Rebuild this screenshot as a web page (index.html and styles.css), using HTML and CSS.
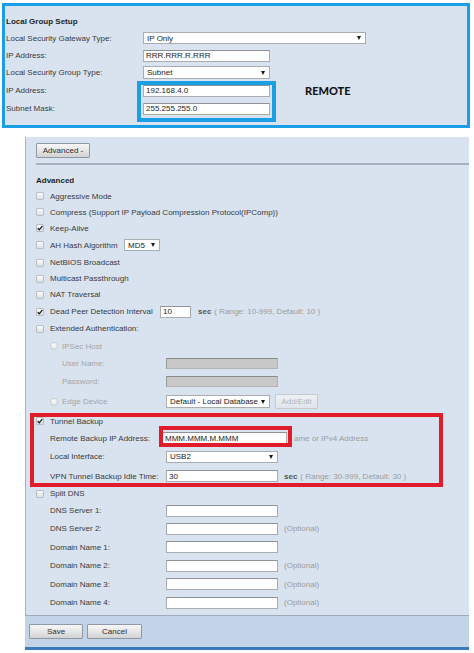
FILE: index.html
```html
<!DOCTYPE html>
<html>
<head>
<meta charset="utf-8">
<title>Local Group Setup</title>
<link rel="stylesheet" href="styles.css">
</head>
<body>
<section class="local">
  <div class="lrow head">Local Group Setup</div>
  <div class="lrow h18"><span class="lbl">Local Security Gateway Type:</span><span class="sel w223">IP Only<i class="arr"></i></span></div>
  <div class="lrow h17"><span class="lbl">IP Address:</span><input class="txt w127" type="text" value="RRR.RRR.R.RRR"></div>
  <div class="lrow h17"><span class="lbl">Local Security Group Type:</span><span class="sel w127 tall">Subnet<i class="arr"></i></span></div>
  <div class="remote-grp">
    <div class="lrow h19"><span class="lbl">IP Address:</span><input class="txt w127" type="text" value="192.168.4.0"><span class="remote-tag">REMOTE</span></div>
    <div class="lrow h17"><span class="lbl">Subnet Mask:</span><input class="txt w127" type="text" value="255.255.255.0"></div>
    <div class="blue-frame"></div>
  </div>
</section>

<section class="panel">
  <button class="btn adv-btn" type="button">Advanced -</button>
  <div class="rule"></div>
  <div class="adv-head">Advanced</div>

  <div class="row h16"><span class="cb"></span>Aggressive Mode</div>
  <div class="row h16"><span class="cb"></span>Compress (Support IP Payload Compression Protocol(IPComp))</div>
  <div class="row h16"><span class="cb"><svg viewBox="0 0 6 6" width="6" height="6"><path d="M0.7 3.1 2.3 4.8 5.4 0.9" fill="none" stroke="#1c1c1c" stroke-width="1.3"/></svg></span>Keep-Alive</div>
  <div class="row h18"><span class="cb"></span><span class="lbl-ah">AH Hash Algorithm</span><span class="sel w36">MD5<i class="arr"></i></span></div>
  <div class="row h17"><span class="cb"></span>NetBIOS Broadcast</div>
  <div class="row h15"><span class="cb"></span>Multicast Passthrough</div>
  <div class="row h17"><span class="cb"></span>NAT Traversal</div>
  <div class="row h17"><span class="cb"><svg viewBox="0 0 6 6" width="6" height="6"><path d="M0.7 3.1 2.3 4.8 5.4 0.9" fill="none" stroke="#1c1c1c" stroke-width="1.3"/></svg></span><span class="lbl-dpd">Dead Peer Detection Interval</span><input class="txt w31" type="text" value="10"><span class="sec">sec</span><span class="hint">( Range: 10-999, Default: 10 )</span></div>
  <div class="row h17"><span class="cb"></span>Extended Authentication:</div>
  <div class="row h18 sub dis"><span class="rd"></span>IPSec Host</div>
  <div class="row h17 sub2 dis"><span class="lbl2">User Name:</span><input class="txt w112 off" type="text" disabled></div>
  <div class="row h19 sub2 dis"><span class="lbl2">Password:</span><input class="txt w112 off" type="text" disabled></div>
  <div class="row h21 sub"><span class="lbl1 dis"><span class="rd"></span>Edge Device</span><span class="sel w104 tall">Default - Local Database<i class="arr"></i></span><button class="btn add-btn" type="button" disabled>Add/Edit</button></div>

  <div class="tunnel">
    <div class="row h18"><span class="cb"><svg viewBox="0 0 6 6" width="6" height="6"><path d="M0.7 3.1 2.3 4.8 5.4 0.9" fill="none" stroke="#1c1c1c" stroke-width="1.3"/></svg></span>Tunnel Backup</div>
    <div class="row h16 sub"><span class="lbl-rb">Remote Backup IP Address:</span><span class="mmm-wrap"><input class="txt w125" type="text" value="MMM.MMM.M.MMM"><span class="mmm-frame"></span></span><span class="hint gap7">ame or IPv4 Address</span></div>
    <div class="row h21 sub"><span class="lbl1">Local Interface:</span><span class="sel w112">USB2<i class="arr"></i></span></div>
    <div class="row h18 sub"><span class="lbl1">VPN Tunnel Backup Idle Time:</span><input class="txt w112" type="text" value="30"><span class="sec gap6">sec</span><span class="hint">( Range: 30-999, Default: 30 )</span></div>
    <div class="red-frame"></div>
  </div>

  <div class="row h17"><span class="cb"></span>Split DNS</div>
  <div class="row h17 sub"><span class="lbl1">DNS Server 1:</span><input class="txt w112" type="text"></div>
  <div class="row h19 sub"><span class="lbl1">DNS Server 2:</span><input class="txt w112" type="text"><span class="hint gap6">(Optional)</span></div>
  <div class="row h18 sub"><span class="lbl1">Domain Name 1:</span><input class="txt w112" type="text"></div>
  <div class="row h19 sub"><span class="lbl1">Domain Name 2:</span><input class="txt w112" type="text"><span class="hint gap6">(Optional)</span></div>
  <div class="row h18 sub"><span class="lbl1">Domain Name 3:</span><input class="txt w112" type="text"><span class="hint gap6">(Optional)</span></div>
  <div class="row h19 sub"><span class="lbl1">Domain Name 4:</span><input class="txt w112" type="text"><span class="hint gap6">(Optional)</span></div>
</section>

<footer class="footer">
  <button class="btn save-btn" type="button">Save</button>
  <button class="btn cancel-btn" type="button">Cancel</button>
</footer>
</body>
</html>
```

FILE: styles.css
```css
* { box-sizing: border-box; }
html, body { margin: 0; padding: 0; background: #ffffff; }
body {
  width: 474px;
  height: 653px;
  overflow: hidden;
  font-family: "Liberation Sans", Arial, sans-serif;
  font-size: 8px;
  color: #3a3a3a;
}

/* ---------- top: local group setup ---------- */
.local {
  margin: 3px 0 0 2px;
  width: 468px;
  border: 3px solid #1b9fe4;
  background: #d9e3ef;
  padding: 7px 0 8px 1px;
}
.lrow { display: flex; align-items: center; }
.head { height: 16px; font-weight: bold; color: #1e1e1e; }
.lrow .lbl { width: 137px; flex: none; }
.remote-grp { position: relative; }
.blue-frame {
  position: absolute;
  left: 131px;
  width: 139px;
  top: 0;
  bottom: -5px;
  border: 4px solid #1b9fe4;
  pointer-events: none;
}
.remote-tag {
  margin-left: 35px;
  font-family: Lato, "Liberation Sans", sans-serif;
  font-weight: 900;
  font-size: 11px;
  color: #151515;
}

.h15 { height: 15px; }
.h16 { height: 16px; }
.h17 { height: 17px; }
.h18 { height: 18px; }
.h19 { height: 19px; }
.h21 { height: 21px; }

/* ---------- form controls ---------- */
.txt {
  font: inherit;
  color: #222;
  height: 12px;
  padding: 0 2px;
  margin: 0;
  border: 1px solid #a9adb2;
  border-top-color: #8e9297;
  background: #ffffff;
  flex: none;
  outline: none;
}
.txt.off {
  height: 11px;
  background: #c8c8c8;
  border-color: #b4b4b4;
  border-top-color: #8a8a8a;
  border-left-color: #9a9a9a;
}
.sel {
  flex: none;
  display: flex;
  align-items: center;
  justify-content: space-between;
  height: 12px;
  padding: 0 4px 0 3px;
  background: #ffffff;
  border: 1px solid #a9adb2;
  color: #222;
}
.sel.tall { height: 13px; }
.arr {
  width: 0;
  height: 0;
  border-left: 2.5px solid transparent;
  border-right: 2.5px solid transparent;
  border-top: 4px solid #1a1a1a;
}
.w223 { width: 223px; }
.w127 { width: 127px; }
.w125 { width: 125px; }
.w112 { width: 112px; }
.w104 { width: 104px; }
.w36 { width: 36px; }
.w31 { width: 31px; }

.btn {
  font: inherit;
  color: #2e2e2e;
  margin: 0;
  padding: 0;
  height: 15px;
  border: 1px solid #8d99a6;
  border-radius: 1px;
  background: linear-gradient(#f7f7f7, #e6e6e6 50%, #d2d2d2);
  flex: none;
}

/* ---------- advanced panel ---------- */
.panel {
  margin: 9px 0 0 25px;
  width: 444px;
  background: #d9e3ef;
  border-left: 1px solid #a7b3c0;
  padding: 6px 0 3px 10px;
}
.adv-btn { display: block; width: 54px; }
.rule { height: 2px; background: #a5b2c0; margin-top: 5px; }
.adv-head {
  height: 16px;
  margin-top: 7px;
  display: flex;
  align-items: center;
  font-weight: bold;
  color: #1e1e1e;
}
.row { display: flex; align-items: center; }
.cb {
  flex: none;
  width: 8px;
  height: 8px;
  margin-right: 6px;
  border: 1px solid #b6bec7;
  border-radius: 1px;
  background: linear-gradient(#fbfbfb, #dcdfe2);
  display: flex;
  align-items: center;
  justify-content: center;
}
.cb svg { display: block; }
.rd {
  flex: none;
  width: 8px;
  height: 8px;
  margin-right: 4px;
  border: 1px solid #c4c9cf;
  border-radius: 50%;
  background: linear-gradient(#fdfdfd, #e4e6e8);
}
.dis { color: #a3a3a3; }
.sub { padding-left: 14px; }
.sub2 { padding-left: 26px; }
.lbl1 { width: 116px; flex: none; display: flex; align-items: center; }
.lbl2 { width: 104px; flex: none; }
.lbl-rb { width: 112px; flex: none; }
.lbl-ah { width: 74px; flex: none; }
.lbl-dpd { width: 110px; flex: none; }
.sec { margin-left: 7px; font-weight: bold; color: #555; }
.sec.gap6 { margin-left: 6px; }
.hint { color: #9c9c9c; margin-left: 3px; }
.hint.gap6 { margin-left: 6px; }
.hint.gap7 { margin-left: 7px; }
.add-btn {
  width: 43px;
  margin-left: 5px;
  color: #b0b4b9;
  border-color: #c3cad2;
  background: linear-gradient(#eef1f4, #dfe5eb);
}

.tunnel { position: relative; }
.red-frame {
  position: absolute;
  left: -6px;
  right: 26px;
  top: 1px;
  bottom: -2px;
  border: 4px solid #e11d2b;
  pointer-events: none;
}
.mmm-wrap { position: relative; display: flex; flex: none; }
.mmm-frame {
  position: absolute;
  left: -3px;
  right: -5px;
  top: -6px;
  bottom: -3px;
  border: 4px solid #e11d2b;
  pointer-events: none;
}

/* ---------- footer ---------- */
.footer {
  margin-left: 25px;
  width: 444px;
  height: 35px;
  border-top: 1px solid #9dabba;
  border-bottom: 3px solid #3a7bbf;
  background: #c3d4e8;
  padding: 8px 0 0 4px;
  display: flex;
  align-items: flex-start;
}
.save-btn { width: 54px; }
.cancel-btn { width: 55px; margin-left: 4px; }
```
